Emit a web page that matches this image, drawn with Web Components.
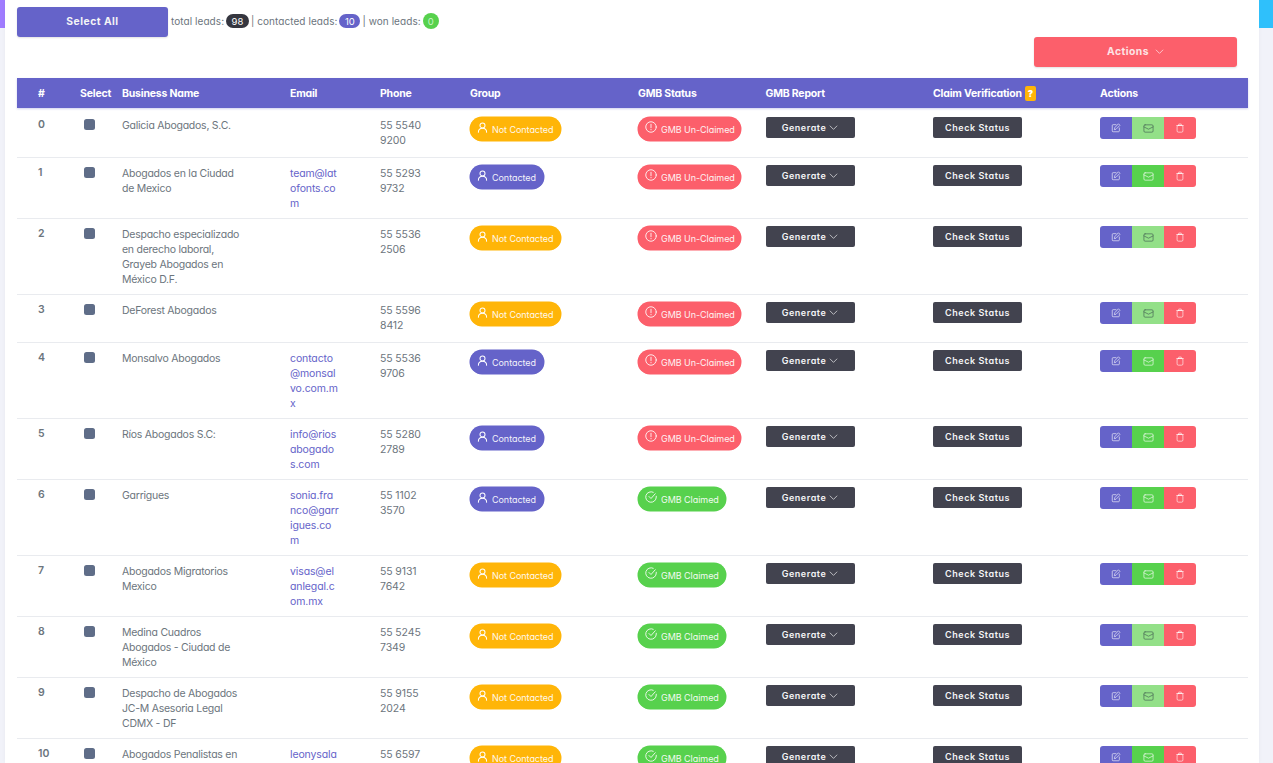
<!DOCTYPE html>
<html lang="es"><head><meta charset="utf-8"><title>Leads</title>
<style>
html,body{margin:0;height:763px;overflow:hidden;background:#f1f2f9}
body{font:400 11px/15px Inter,"Noto Sans",sans-serif;font-feature-settings:"cv11";color:#6c757d}
</style></head><body>
<lead-page></lead-page>
<script>
const ICONS={
user:'<circle cx="12" cy="7.500" r="5.500"/><path d="M3 22.500c0-5.500 3.500-9 9-9s9 3.500 9 9"/>',
alert:'<circle cx="12" cy="12" r="10.500"/><path d="M12 6.500v7M12 17v.6"/>',
check:'<path d="M22.500 10.500V12a10.500 10.500 0 1 1-6-9.500"/><path d="M8 11l4 4 8.500-9.500"/>',
chev:'<path d="M3 8l9 9 9-9"/>',
edit:'<path d="M12 4H5a2 2 0 0 0-2 2v13a2 2 0 0 0 2 2h13a2 2 0 0 0 2-2v-7"/><path d="M18.500 2.500l3 3L12 15l-4 1 1-4z"/>',
mail:'<rect x="2" y="4" width="20" height="16" rx="2.500"/><path d="M2 8.500l10 5 10-5"/>',
trash:'<rect x="5" y="6" width="14" height="16" rx="3"/><path d="M4 6h16M9 6V2.500h6V6"/>'};
class XIcon extends HTMLElement{connectedCallback(){
 const s=this.getAttribute('size')||10,w=this.getAttribute('stroke')||2;
 this.shadowRoot||this.attachShadow({mode:'open'});
 this.shadowRoot.innerHTML=`<style>:host{display:inline-flex;flex:none}svg{display:block}</style><svg width="${s}" height="${s}" viewBox="0 0 24 24" fill="none" stroke="currentColor" stroke-width="${w}" stroke-linecap="round" stroke-linejoin="round">${ICONS[this.getAttribute('name')]}</svg>`;
}}
customElements.define('x-icon',XIcon);

class XBadge extends HTMLElement{constructor(){super();this.attachShadow({mode:'open'}).innerHTML=`<style>
:host{display:inline-flex;align-items:center;justify-content:center;height:14px;min-width:16px;padding:0 5.500px;box-sizing:border-box;border-radius:8px;background:var(--c);color:#fff;font-size:9.500px;margin:0 1px}
:host([one]){padding:0;border-radius:50%;width:16px;height:16px;color:#c9f5c4}
</style><slot></slot>`}}
customElements.define('x-badge',XBadge);

class XBtn extends HTMLElement{constructor(){super();this.attachShadow({mode:'open'}).innerHTML=`<style>
:host{display:inline-flex;align-items:center;justify-content:center;gap:3px;box-sizing:border-box;border-radius:2px;color:#f4f4f6;background:var(--c,#42434f);font-weight:600;font-size:9px;letter-spacing:.55px;width:89px;height:21px;padding-bottom:1px}
:host([big]){border-radius:3px;font-size:10.300px;font-weight:700;height:30px;letter-spacing:.5px;box-shadow:0 1px 2px rgba(0,0,0,.12)}
</style><slot></slot>`}}
customElements.define('x-btn',XBtn);

class XPill extends HTMLElement{constructor(){super();this.attachShadow({mode:'open'}).innerHTML=`<style>
:host{display:inline-flex;align-items:center;box-sizing:border-box;height:24px;border-radius:12px;padding-left:6.500px;gap:4.500px;color:#fff;font-size:9px;letter-spacing:-.05px;background:var(--c);white-space:nowrap;box-shadow:0 0 0 .5px var(--c)}
.i{display:flex;margin-top:-4px}.t{margin-top:1px;opacity:.92}
</style><span class="i"><slot name="icon"></slot></span><span class="t"><slot></slot></span>`}}
customElements.define('x-pill',XPill);

class XActions extends HTMLElement{constructor(){super();this.attachShadow({mode:'open'}).innerHTML=`<style>
:host{display:inline-flex;height:22px;border-radius:3px;overflow:hidden;color:rgba(255,255,255,.85)}
span{width:32px;display:flex;align-items:center;justify-content:center;background:var(--b)}
.e{--b:#6563c9}.m{--b:#57d14d}.d{--b:#fc5f6b}
:host([nomail]) .m{--b:#93e088;color:#4b6e58}
</style><span class="e"><x-icon name="edit" size="10" stroke="1.700"></x-icon></span><span class="m"><x-icon name="mail" size="11" stroke="1.600"></x-icon></span><span class="d"><x-icon name="trash" size="10" stroke="1.700"></x-icon></span>`}}
customElements.define('x-actions',XActions);

const COLS='63px 42px 168px 90px 90px 168px 127.500px 167.500px 167px 1fr';
class LeadHead extends HTMLElement{constructor(){super();this.attachShadow({mode:'open'}).innerHTML=`<style>
:host{display:grid;grid-template-columns:${COLS};align-items:center;height:30px;margin-bottom:1px;background:#6563c9;color:#fff;font-weight:700;font-size:10.500px;letter-spacing:-.2px;box-shadow:0 1px 2px rgba(101,99,201,.3)}
span:nth-of-type(1){padding-left:21px}
b{display:inline-block;width:11px;height:15px;margin-left:3px;vertical-align:top;border-radius:2px;background:#ffb508;text-align:center;font-size:9px;line-height:15px}
</style><span>#</span><span>Select</span><span>Business Name</span><span>Email</span><span>Phone</span><span>Group</span><span>GMB Status</span><span>GMB Report</span><span>Claim Verification<b>?</b></span><span>Actions</span>`}}
customElements.define('lead-head',LeadHead);

class LeadRow extends HTMLElement{constructor(){super();this.attachShadow({mode:'open'}).innerHTML=`<style>
:host{display:grid;grid-template-columns:${COLS};box-sizing:border-box;min-height:48px;padding:7px 0 8px;border-top:1px solid #e9ebef;align-items:start;font-size:10.500px}
:host([first]){border-top:0;padding-top:8px}
.n{padding:0 0 0 21px;font-weight:600;font-size:10.500px}
.c{display:block;width:11px;height:11px;margin:2px 0 0 4px;border-radius:2.500px;background:#5f6d88}
.w,.e,.p{display:block;margin:1px 0 -1px}
.w{width:130px;letter-spacing:-.25px}.e{color:#6563c9;width:49px;letter-spacing:-.12px}.p{width:45px;letter-spacing:-.12px}
</style><span class="n"><slot name="n"></slot></span><span><i class="c"></i></span><span class="w"><slot name="name"></slot></span><span class="e"><slot name="email"></slot></span><span class="p"><slot name="phone"></slot></span><span><slot name="group"></slot></span><span><slot name="gmb"></slot></span><span><slot name="report"></slot></span><span><slot name="claim"></slot></span><span><slot name="actions"></slot></span>`}}
customElements.define('lead-row',LeadRow);

const R=[
['Galicia Abogados, S.C.','','55 5540<br>9200',0,0],
['Abogados en la Ciudad<br>de Mexico','team@lat<wbr>ofonts.co<wbr>m','55 5293<br>9732',1,0],
['Despacho especializado<br>en derecho laboral,<br>Grayeb Abogados en<br>México D.F.','','55 5536<br>2506',0,0],
['DeForest Abogados','','55 5596<br>8412',0,0],
['Monsalvo Abogados','contacto<wbr>@monsal<wbr>vo.com.m<wbr>x','55 5536<br>9706',1,0],
['Ríos Abogados S.C:','info@rios<wbr>abogado<wbr>s.com','55 5280<br>2789',1,0],
['Garrigues','sonia.fra<wbr>nco@garr<wbr>igues.co<br>m','55 1102<br>3570',1,1],
['Abogados Migratorios<br>Mexico','visas@el<wbr>anlegal.c<wbr>om.mx','55 9131<br>7642',0,1],
['Medina Cuadros<br>Abogados - Ciudad de<br>México','','55 5245<br>7349',0,1],
['Despacho de Abogados<br>JC-M Asesoria Legal<br>CDMX - DF','','55 9155<br>2024',0,1],
['Abogados Penalistas en','leonysala','55 6597',0,1]];
class LeadPage extends HTMLElement{constructor(){super();this.attachShadow({mode:'open'}).innerHTML=`<style>
:host{display:flex;height:763px;overflow:hidden}
.l,.r{flex:none}.l{width:5px}.r{width:14px}
.l i,.r i{display:block;height:28px}.l i{background:#a07cff}.r i{background:#2fc0fb}
main{width:1254px;flex:none;box-sizing:border-box;background:#fff;padding:7px 11px 0 12px;box-shadow:0 0 4px rgba(0,0,0,.04)}
.top{display:flex;align-items:center;gap:3px;height:30px}
.stats{display:flex;align-items:center;gap:1px;padding-bottom:2px;font-size:10px;letter-spacing:.06px;white-space:nowrap}
.act{display:flex;justify-content:flex-end;padding-right:11px;margin-bottom:11px}
</style><div class="l"><i></i></div><main>
<div class="top"><x-btn big style="--c:#6563c9;width:151px">Select All</x-btn><span class="stats">total leads: <x-badge style="--c:#35363f">98</x-badge> | contacted leads: <x-badge style="--c:#6563c9">10</x-badge> | won leads: <x-badge one style="--c:#57d14d">0</x-badge></span></div>
<div class="act"><x-btn big style="--c:#fc5f6b;width:203px;gap:6px;color:#fde3e5">Actions <x-icon name="chev" size="9"></x-icon></x-btn></div>
<lead-head></lead-head>
${R.map((r,i)=>`<lead-row ${i?'':'first'}>
<span slot="n">${i}</span><span slot="name">${r[0]}</span><span slot="email">${r[1]}</span><span slot="phone">${r[2]}</span>
<x-pill slot="group" style="--c:${r[3]?'#6563c9':'#ffb508'};width:${r[3]?74:91}px"><x-icon slot="icon" name="user" size="11" stroke="2.200"></x-icon>${r[3]?'Contacted':'Not Contacted'}</x-pill>
<x-pill slot="gmb" style="--c:${r[4]?'#57d14d':'#fc5f6b'};width:${r[4]?88:103}px"><x-icon slot="icon" name="${r[4]?'check':'alert'}" size="12" stroke="1.700"></x-icon>${r[4]?'GMB Claimed':'GMB Un-Claimed'}</x-pill>
<x-btn slot="report">Generate<x-icon name="chev" size="9" stroke="1.800"></x-icon></x-btn>
<x-btn slot="claim">Check Status</x-btn>
<x-actions slot="actions" ${r[1]?'':'nomail'}></x-actions></lead-row>`).join('')}
</main><div class="r"><i></i></div>`}}
customElements.define('lead-page',LeadPage);
</script></body></html>
